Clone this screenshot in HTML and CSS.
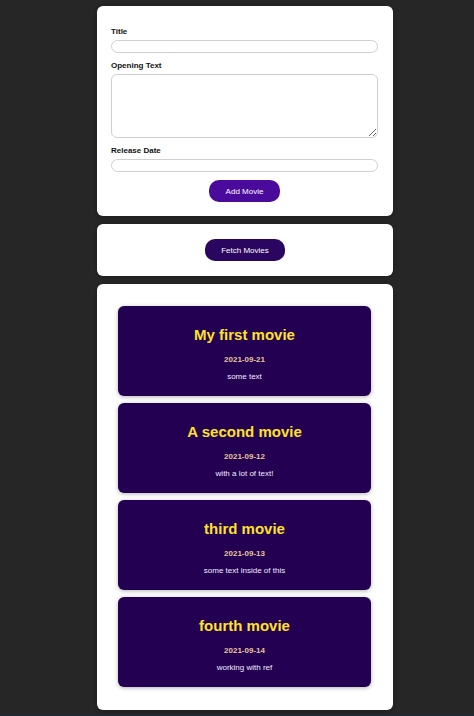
FILE: index.html
```html
<!DOCTYPE html>
<html lang="en">
<head>
<meta charset="utf-8">
<title>Movies</title>
<link rel="stylesheet" href="styles.css">
</head>
<body>
<main class="page">
  <section class="card card-form">
    <form class="form">
      <label class="label" for="title">Title</label>
      <input class="input" id="title" type="text">
      <label class="label" for="opening">Opening Text</label>
      <textarea class="textarea" id="opening"></textarea>
      <label class="label" for="date">Release Date</label>
      <input class="input" id="date" type="text">
      <div class="actions">
        <button class="btn btn-add" type="button">Add Movie</button>
      </div>
    </form>
  </section>
  <section class="card card-fetch">
    <button class="btn btn-fetch" type="button">Fetch Movies</button>
  </section>
  <section class="card card-list">
    <ul class="movies">
      <li class="movie">
        <h2 class="movie-title">My first movie</h2>
        <h3 class="movie-date">2021-09-21</h3>
        <p class="movie-text">some text</p>
      </li>
      <li class="movie">
        <h2 class="movie-title">A second movie</h2>
        <h3 class="movie-date">2021-09-12</h3>
        <p class="movie-text">with a lot of text!</p>
      </li>
      <li class="movie">
        <h2 class="movie-title">third movie</h2>
        <h3 class="movie-date">2021-09-13</h3>
        <p class="movie-text">some text inside of this</p>
      </li>
      <li class="movie">
        <h2 class="movie-title">fourth movie</h2>
        <h3 class="movie-date">2021-09-14</h3>
        <p class="movie-text">working with ref</p>
      </li>
    </ul>
  </section>
  <div class="strip"></div>
</main>
</body>
</html>
```

FILE: styles.css
```css
* { box-sizing: border-box; }

html, body {
  margin: 0;
  padding: 0;
  background: #262626;
  font-family: "Liberation Sans", Arial, sans-serif;
}

.page {
  display: flex;
  flex-direction: column;
  padding-top: 6px;
}

.card {
  background: #ffffff;
  border-radius: 6px;
  margin: 0 81px 8px 97px;
  width: 296px;
  box-shadow: 0 1px 4px rgba(0, 0, 0, 0.25);
}

.card-form {
  padding: 21px 15px 14px 14px;
}

.form {
  display: flex;
  flex-direction: column;
}

.label {
  font-size: 8px;
  font-weight: bold;
  line-height: 10px;
  color: #111;
  margin-bottom: 3px;
}

.input {
  height: 13px;
  border: 1px solid #cfcfcf;
  border-radius: 7px;
  margin: 0 0 8px 0;
  padding: 0 6px;
  font: inherit;
  font-size: 8px;
  background: #fff;
}

.textarea {
  height: 64px;
  border: 1px solid #cfcfcf;
  border-radius: 6px;
  margin: 0 0 8px 0;
  padding: 4px 6px;
  font: inherit;
  font-size: 8px;
  resize: vertical;
}

.actions {
  display: flex;
  justify-content: center;
}

.btn {
  font-family: "Liberation Sans", Arial, sans-serif;
  font-size: 8px;
  color: #fff;
  border: none;
  height: 22px;
  border-radius: 10px;
  cursor: pointer;
  padding: 0;
}

.btn-add {
  width: 71px;
  background: #4a0a9c;
}

.card-fetch {
  display: flex;
  justify-content: center;
  padding: 15px 0 15px 0;
}

.btn-fetch {
  width: 80px;
  background: #2a0660;
}

.card-list {
  padding: 22px 22px 23px 21px;
  margin-bottom: 4px;
}

.movies {
  list-style: none;
  margin: 0;
  padding: 0;
  display: flex;
  flex-direction: column;
  gap: 7px;
}

.movie {
  height: 90px;
  background: #230052;
  border-radius: 6px;
  padding-top: 20px;
  text-align: center;
  display: flex;
  flex-direction: column;
  box-shadow: 0 1px 4px rgba(0, 0, 0, 0.3);
}

.movie-title {
  margin: 0;
  font-size: 15px;
  line-height: 18px;
  font-weight: bold;
  color: #fde227;
}

.movie-date {
  margin: 11px 0 0 0;
  font-size: 8px;
  line-height: 10px;
  font-weight: bold;
  color: #e6c79b;
}

.movie-text {
  margin: 7px 0 0 0;
  font-size: 8px;
  line-height: 10px;
  color: #f2ecff;
}

.strip {
  height: 10px;
  background: #1f2a2e;
}
```
